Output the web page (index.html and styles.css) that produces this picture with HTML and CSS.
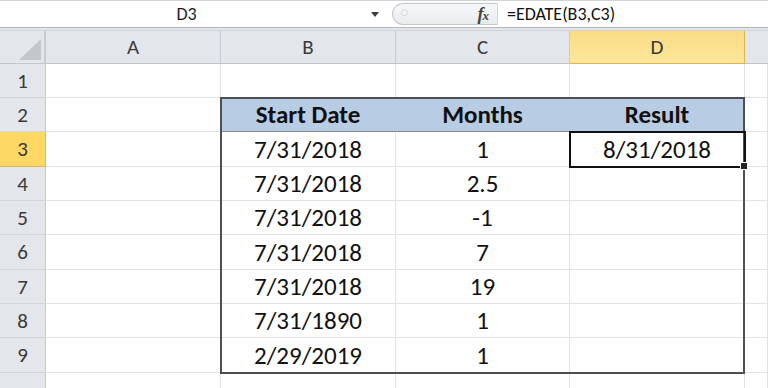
FILE: index.html
```html
<!DOCTYPE html>
<html>
<head>
<meta charset="utf-8">
<link rel="stylesheet" href="styles.css">
</head>
<body>
<div class="app">
  <div class="formula-bar">
    <div class="namebox">
      <span class="name">D3</span>
      <span class="dd"></span>
    </div>
    <div class="fx-area">
      <span class="dot"></span>
      <span class="fx"><i>f</i><i class="x">x</i></span>
    </div>
    <div class="formula">=EDATE(B3,C3)</div>
  </div>
  <div class="sep"></div>
  <div class="sheet">
  <div class="cells grid">
    <div class="corner"><span class="tri"></span></div>
    <div class="ch">A</div>
    <div class="ch">B</div>
    <div class="ch">C</div>
    <div class="ch sel">D</div>
    <div class="ch last"></div>

    <div class="rh">1</div>
    <div class="c"></div><div class="c"></div><div class="c"></div><div class="c"></div><div class="c"></div>

    <div class="rh">2</div>
    <div class="c"></div>
    <div class="c hd">Start Date</div><div class="c hd">Months</div><div class="c hd">Result</div>
    <div class="c"></div>

    <div class="rh sel">3</div>
    <div class="c"></div>
    <div class="c">7/31/2018</div><div class="c">1</div><div class="c">8/31/2018</div>
    <div class="c"></div>

    <div class="rh">4</div>
    <div class="c"></div>
    <div class="c">7/31/2018</div><div class="c">2.5</div><div class="c"></div>
    <div class="c"></div>

    <div class="rh">5</div>
    <div class="c"></div>
    <div class="c">7/31/2018</div><div class="c">-1</div><div class="c"></div>
    <div class="c"></div>

    <div class="rh">6</div>
    <div class="c"></div>
    <div class="c">7/31/2018</div><div class="c">7</div><div class="c"></div>
    <div class="c"></div>

    <div class="rh">7</div>
    <div class="c"></div>
    <div class="c">7/31/2018</div><div class="c">19</div><div class="c"></div>
    <div class="c"></div>

    <div class="rh">8</div>
    <div class="c"></div>
    <div class="c">7/31/1890</div><div class="c">1</div><div class="c"></div>
    <div class="c"></div>

    <div class="rh">9</div>
    <div class="c"></div>
    <div class="c">2/29/2019</div><div class="c">1</div><div class="c"></div>
    <div class="c"></div>

    <div class="rh top">10</div>
    <div class="c"></div><div class="c"></div><div class="c"></div><div class="c"></div><div class="c"></div>
  </div>
  <div class="overlay grid">
    <div class="frame"></div>
    <div class="active"></div>
  </div>
  </div>
</div>
</body>
</html>
```

FILE: styles.css
```css
* { box-sizing: border-box; }
html, body { margin: 0; padding: 0; }
body {
  width: 768px;
  height: 388px;
  overflow: hidden;
  background: #fff;
  font-family: "Carlito", "Lato", sans-serif;
  color: #000;
}
.app { display: flex; flex-direction: column; height: 388px; }

.formula-bar {
  height: 28px;
  display: flex;
  align-items: stretch;
  border-top: 1px solid #d0d3d7;
  border-bottom: 1px solid #b4b8bd;
  background: #fff;
}
.namebox {
  width: 388px;
  display: flex;
  align-items: center;
  padding-right: 6px;
}
.name {
  flex: 1;
  text-align: center;
  font-size: 18px;
  color: #1e1e1e;
  padding-left: 2px;
}
.dd {
  width: 0; height: 0;
  border-left: 4px solid transparent;
  border-right: 4px solid transparent;
  border-top: 5px solid #3c3c3c;
  margin-right: 3px;
}
.fx-area {
  width: 106px;
  margin: 2px 0 2px 4px;
  border: 1px solid #c5c9ce;
  border-right: 1px solid #d3d6da;
  border-radius: 12px 0 0 12px;
  background: linear-gradient(#f7f8f9, #e9ebee);
  display: flex;
  align-items: center;
  justify-content: space-between;
  padding: 0 9px 0 8px;
}
.dot {
  width: 7px; height: 7px;
  border-radius: 50%;
  border: 1px solid #d2d5d9;
  background: #f4f5f6;
  margin-top: -4px;
}
.fx {
  font-family: "Liberation Serif", serif;
  font-size: 18px;
  font-weight: bold;
  color: #444;
  letter-spacing: -1px;
}
.fx .x { font-size: 13px; }
.formula {
  flex: 1;
  display: flex;
  align-items: center;
  padding-left: 9px;
  font-size: 18px;
  color: #111;
}
.sep { height: 3px; background: #e2e5e9; border-bottom: 1px solid #cfd3d8; }

.sheet {
  flex: 1;
  display: grid;
  min-height: 0;
}
.sheet > .cells, .sheet > .overlay { grid-area: 1 / 1; }
.grid {
  display: grid;
  grid-template-columns: 46px 175px 175px 174px 175px 1fr;
  grid-template-rows: 33px 34px 34px 35px 34px 34px 35px 34px 34px 35px 1fr;
  min-height: 0;
  overflow: hidden;
}
.overlay { pointer-events: none; }
.corner {
  background: #e3e6ea;
  border-right: 2px solid #c9cdd2;
  border-bottom: 1px solid #c3c7cc;
  display: flex;
  align-items: flex-end;
  justify-content: flex-end;
  padding: 0 3px 3px 0;
}
.tri {
  width: 0; height: 0;
  border-left: 22px solid transparent;
  border-bottom: 21px solid #c3c7cc;
}
.ch {
  background: #e3e6ea;
  border-right: 1px solid #c6cad0;
  border-bottom: 1px solid #c3c7cc;
  display: flex;
  align-items: center;
  justify-content: center;
  font-size: 21px;
  color: #3a3a3a;
}
.ch.sel {
  background: linear-gradient(#fbdc84, #fde79c);
  border-right: 1px solid #e3b54c;
  border-bottom: 1px solid #e3b54c;
}
.ch.last { border-right: none; }
.rh {
  background: #e3e6ea;
  border-right: 1px solid #c6cad0;
  border-bottom: 1px solid #d2d6da;
  display: flex;
  align-items: center;
  justify-content: center;
  font-size: 21px;
  color: #3a3a3a;
}
.rh.sel {
  background: #fdd865;
  border-right: 1px solid #e3b54c;
  border-bottom: 1px solid #e3b54c;
}
.rh.top { align-items: flex-start; padding-top: 8px; }
.c {
  border-right: 1px solid #e1e2e3;
  border-bottom: 1px solid #e1e2e3;
  display: flex;
  align-items: center;
  justify-content: center;
  font-size: 25px;
  color: #111;
}
.c.hd {
  background: #b8cce4;
  border-right-color: #b8cce4;
  border-bottom: 1px solid #7f858c;
  font-weight: bold;
}
.frame {
  grid-column: 3 / 6;
  grid-row: 3 / 11;
  border: 2px solid #4f4f4f;
  margin: -1px 0 -1px -1px;
}
.active {
  grid-column: 5 / 6;
  grid-row: 4 / 5;
  border: 2px solid #111;
  margin: -1px -1px -1px -1px;
  position: relative;
}
.active::after {
  content: "";
  position: absolute;
  right: -4px;
  bottom: -4px;
  width: 6px;
  height: 6px;
  background: #222;
  border: 1px solid #fff;
}
```
